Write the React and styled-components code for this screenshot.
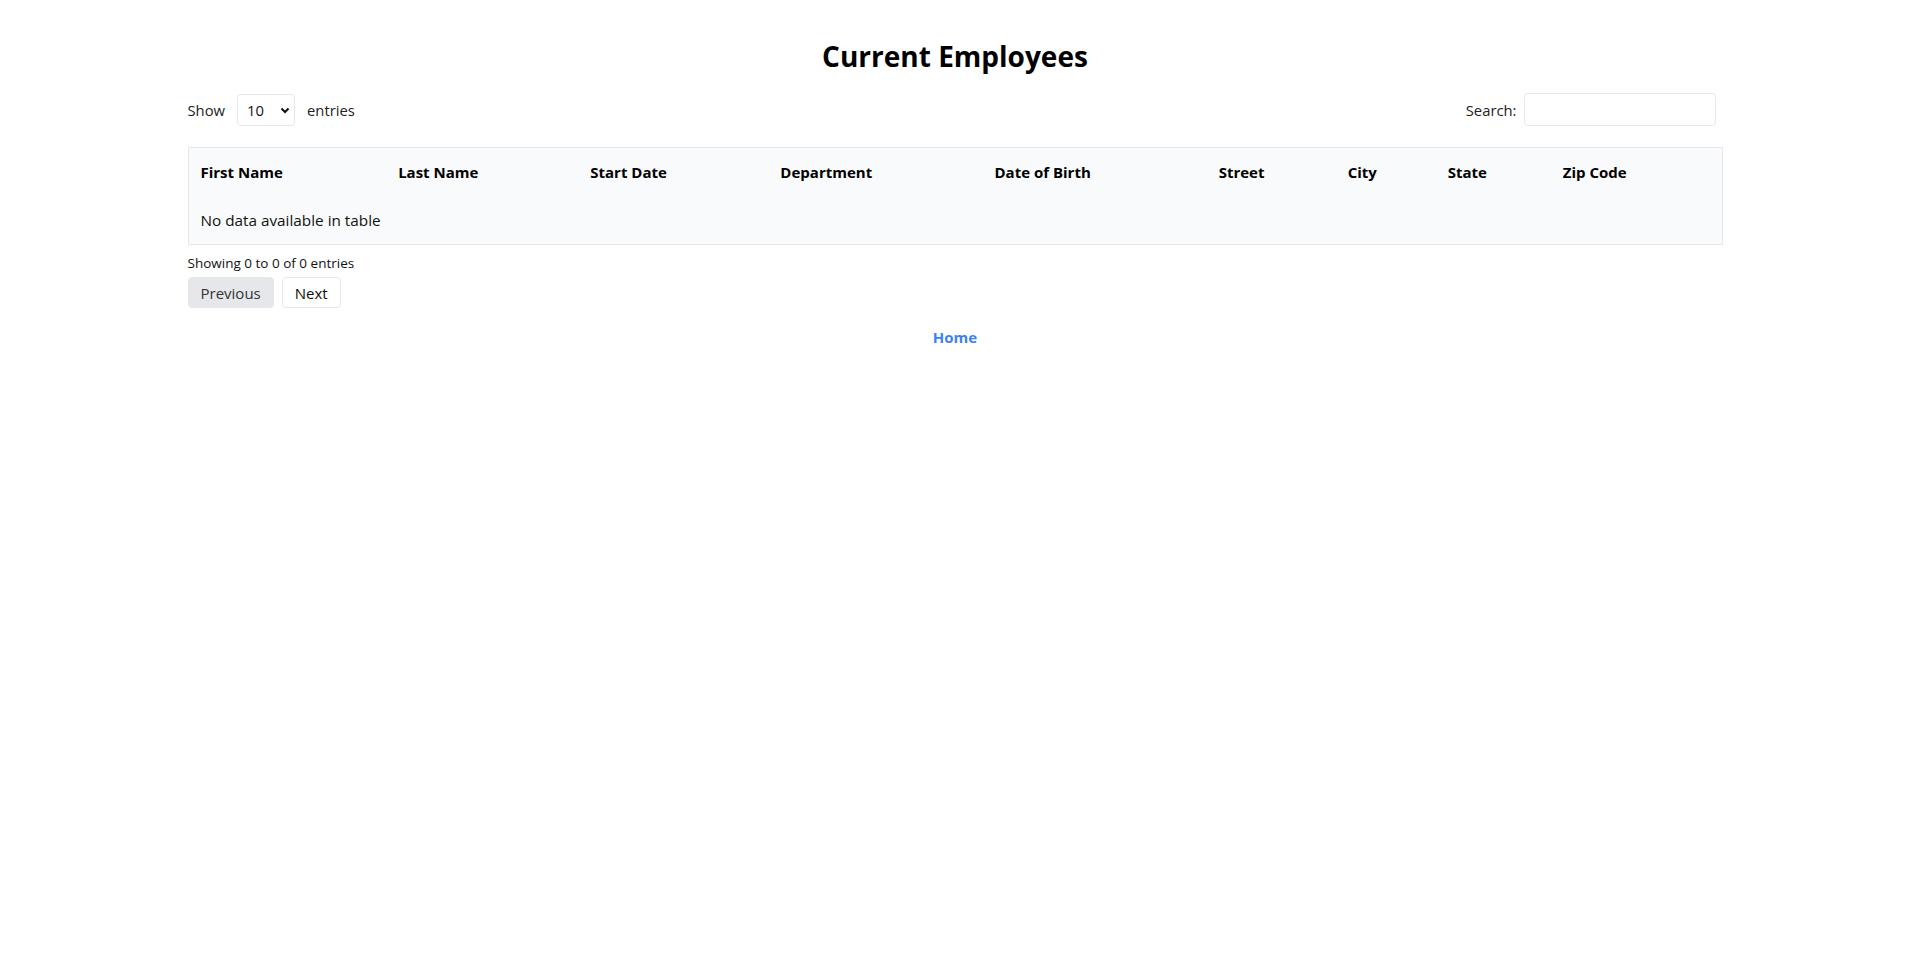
import React from "react";
import styled, { createGlobalStyle } from "styled-components";

const Global = createGlobalStyle`
  html, body { margin: 0; padding: 0; background: #fff; }
  body { font-family: "Open Sans", "Noto Sans", sans-serif; color: #111; padding-right: 3px; }
  * { box-sizing: border-box; }
`;

const Page = styled.main`
  width: 1535px;
  margin: 0 auto;
  display: flex;
  flex-direction: column;
`;

const Title = styled.h1`
  margin: 38px 0 0;
  font-size: 28px;
  line-height: 36px;
  font-weight: 700;
  text-align: center;
  color: #000;
`;

const Controls = styled.div`
  margin-top: 19px;
  display: flex;
  align-items: center;
  justify-content: space-between;
  padding-right: 7px;
  font-size: 14.8px;
  color: #222;
`;

const Group = styled.label`
  display: flex;
  align-items: center;
  gap: ${(p) => p.$gap || 12}px;
`;

const SelectWrap = styled.span`
  position: relative;
  display: inline-flex;
`;

const Select = styled.select`
  appearance: none;
  width: 58px;
  height: 32px;
  border: 1px solid #e5e7eb;
  border-radius: 4px;
  background: #fff;
  padding: 0 0 0 9px;
  font: inherit;
  font-size: 14.8px;
  color: #111;
`;

const Chevron = styled.svg`
  position: absolute;
  right: 5px;
  top: 13px;
  pointer-events: none;
`;

const SearchInput = styled.input`
  width: 192px;
  height: 33px;
  border: 1px solid #e5e7eb;
  border-radius: 4px;
  background: #fff;
  padding: 0 8px;
  font: inherit;
`;

const Table = styled.table`
  margin-top: 21px;
  width: 100%;
  border-collapse: collapse;
  table-layout: fixed;
  background: #f9fafb;
  border: 1px solid #e5e7eb;
`;

const Th = styled.th`
  text-align: left;
  font-size: 15px;
  font-weight: 700;
  color: #000;
  padding: 12px 12px;
  line-height: 24px;
  height: 48px;
`;

const Td = styled.td`
  padding: 12px 12px;
  font-size: 15.3px;
  line-height: 24px;
  height: 48px;
  color: #111;
`;

const Info = styled.div`
  margin-top: 8px;
  font-size: 13.5px;
  line-height: 20px;
  color: #111;
`;

const Pager = styled.div`
  margin-top: 4px;
  display: flex;
  gap: 8px;
`;

const PageButton = styled.button`
  height: 31px;
  padding: 0 12px;
  border-radius: 4px;
  border: 1px solid #e5e7eb;
  background: ${(p) => (p.$disabled ? "#e5e7eb" : "#fff")};
  color: ${(p) => (p.$disabled ? "#333" : "#111")};
  font: inherit;
  font-size: 15px;
  cursor: pointer;
`;

const HomeLink = styled.a`
  margin-top: 17px;
  align-self: center;
  font-size: 15px;
  line-height: 24px;
  font-weight: 700;
  color: #3b82f6;
  text-decoration: none;
`;

const columns = [
  ["First Name", 198],
  ["Last Name", 192],
  ["Start Date", 190],
  ["Department", 214],
  ["Date of Birth", 224],
  ["Street", 129],
  ["City", 100],
  ["State", 115],
  ["Zip Code", 171],
];

export default function App() {
  return (
    <>
      <Global />
      <Page>
        <Title>Current Employees</Title>
        <Controls>
          <Group>
            Show
            <SelectWrap>
              <Select defaultValue="10">
                <option>10</option>
                <option>25</option>
                <option>50</option>
                <option>100</option>
              </Select>
              <Chevron width="10" height="7" viewBox="0 0 10 7">
                <path d="M1.5 1.5 L5 5 L8.5 1.5" fill="none" stroke="#111" strokeWidth="2" />
              </Chevron>
            </SelectWrap>
            entries
          </Group>
          <Group $gap={7}>
            Search:
            <SearchInput type="search" />
          </Group>
        </Controls>
        <Table>
          <colgroup>
            {columns.map(([n, w]) => (
              <col key={n} style={{ width: w }} />
            ))}
          </colgroup>
          <thead>
            <tr>
              {columns.map(([n]) => (
                <Th key={n}>{n}</Th>
              ))}
            </tr>
          </thead>
          <tbody>
            <tr>
              <Td colSpan={9}>No data available in table</Td>
            </tr>
          </tbody>
        </Table>
        <Info>Showing 0 to 0 of 0 entries</Info>
        <Pager>
          <PageButton $disabled>Previous</PageButton>
          <PageButton>Next</PageButton>
        </Pager>
        <HomeLink href="#">Home</HomeLink>
      </Page>
    </>
  );
}
